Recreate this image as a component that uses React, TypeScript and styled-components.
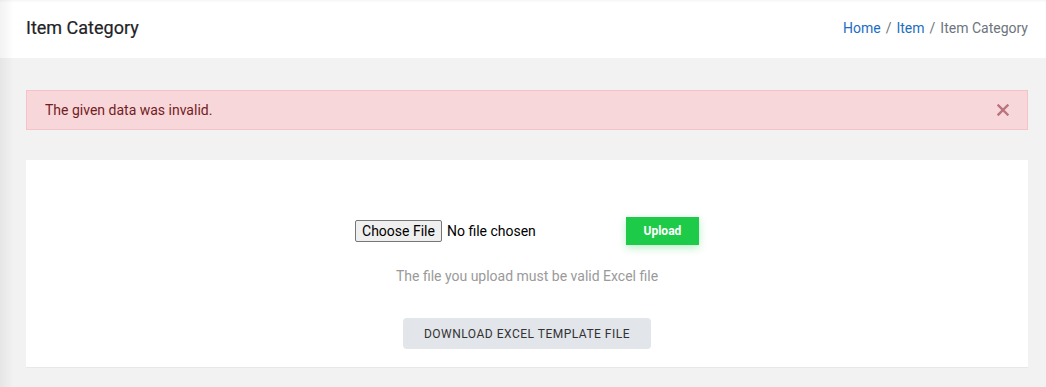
import React from 'react'
import styled, { createGlobalStyle } from 'styled-components'

const GlobalStyle = createGlobalStyle`
  html, body {
    margin: 0;
    padding: 0;
    background: #f2f2f2;
    font-family: Roboto, "Liberation Sans", Arial, sans-serif;
  }
`

const Page = styled.div`
  position: relative;
  width: 1046px;
  height: 387px;
  background: #f2f2f2;
  overflow: hidden;
  &::before {
    content: '';
    position: absolute;
    left: 0;
    top: 0;
    bottom: 0;
    width: 14px;
    background: linear-gradient(to right, rgba(0, 0, 0, 0.05), rgba(0, 0, 0, 0));
    pointer-events: none;
    z-index: 2;
  }
`

const Header = styled.div`
  height: 58px;
  box-sizing: border-box;
  background: #fff;
  display: flex;
  align-items: center;
  justify-content: space-between;
  padding: 0 18px 3px 26px;
  box-shadow: inset 0 3px 3px -2px rgba(0, 0, 0, 0.05);
`

const Title = styled.h1`
  margin: 0;
  font-size: 18px;
  font-weight: 400;
  color: #1f2327;
  -webkit-text-stroke: 0.2px #1f2327;
`

const Crumbs = styled.nav`
  display: flex;
  align-items: center;
  font-size: 14px;
  color: #6c757d;
`

const Crumb = styled.a`
  color: #1b6ec2;
  text-decoration: none;
`

const Sep = styled.span`
  padding: 0 5px;
  color: #6c757d;
`

const Content = styled.div`
  padding: 32px 18px 0 26px;
  display: flex;
  flex-direction: column;
`

const Alert = styled.div`
  height: 38px;
  display: flex;
  align-items: center;
  justify-content: space-between;
  padding: 0 18px;
  background: #f8d7da;
  border: 1px solid #f5c2c7;
  color: #721c24;
  font-size: 14px;
`

const Close = styled.button`
  border: 0;
  background: none;
  padding: 0;
  display: flex;
  align-items: center;
  cursor: pointer;
`

const Card = styled.div`
  margin-top: 30px;
  height: 208px;
  background: #fff;
  border-bottom: 1px solid #e8e8e8;
  display: flex;
  flex-direction: column;
  align-items: center;
  padding-top: 57px;
  box-sizing: border-box;
`

const UploadRow = styled.div`
  display: flex;
  align-items: center;
`

const FileButton = styled.span`
  display: inline-flex;
  align-items: center;
  height: 22px;
  padding: 0 6px;
  box-sizing: border-box;
  border: 1px solid #767676;
  border-radius: 2px;
  background: #efefef;
  font-size: 14px;
  color: #000;
`

const FileName = styled.span`
  font-size: 14px;
  color: #000;
  margin-left: 5px;
  width: 179px;
`

const UploadButton = styled.button`
  height: 28px;
  width: 73px;
  border: 0;
  background: #1dcb48;
  color: #fff;
  font-family: Roboto, "Liberation Sans", Arial, sans-serif;
  font-weight: 700;
  font-size: 12px;
  box-shadow: 0 3px 8px rgba(29, 203, 72, 0.3);
`

const Hint = styled.p`
  margin: 23px 0 0;
  font-size: 14px;
  color: #9a9a9a;
`

const DownloadButton = styled.button`
  margin-top: 34px;
  width: 248px;
  height: 31px;
  border: 0;
  border-radius: 4px;
  background: #e2e5ea;
  color: #333;
  font-family: Roboto, "Liberation Sans", Arial, sans-serif;
  font-size: 12px;
  letter-spacing: 0.5px;
`

export default function App() {
  return (
    <Page>
      <GlobalStyle />
      <Header>
        <Title>Item Category</Title>
        <Crumbs>
          <Crumb href="#">Home</Crumb>
          <Sep>/</Sep>
          <Crumb href="#">Item</Crumb>
          <Sep>/</Sep>
          <span>Item Category</span>
        </Crumbs>
      </Header>
      <Content>
        <Alert>
          <span>The given data was invalid.</span>
          <Close aria-label="Close">
            <svg width="12" height="12" viewBox="0 0 12 12">
              <path d="M1.5 1.5 L10.5 10.5 M10.5 1.5 L1.5 10.5" stroke="#b9737e" strokeWidth="2.4" strokeLinecap="square" />
            </svg>
          </Close>
        </Alert>
        <Card>
          <UploadRow>
            <FileButton>Choose File</FileButton>
            <FileName>No file chosen</FileName>
            <UploadButton>Upload</UploadButton>
          </UploadRow>
          <Hint>The file you upload must be valid Excel file</Hint>
          <DownloadButton>DOWNLOAD EXCEL TEMPLATE FILE</DownloadButton>
        </Card>
      </Content>
    </Page>
  )
}
